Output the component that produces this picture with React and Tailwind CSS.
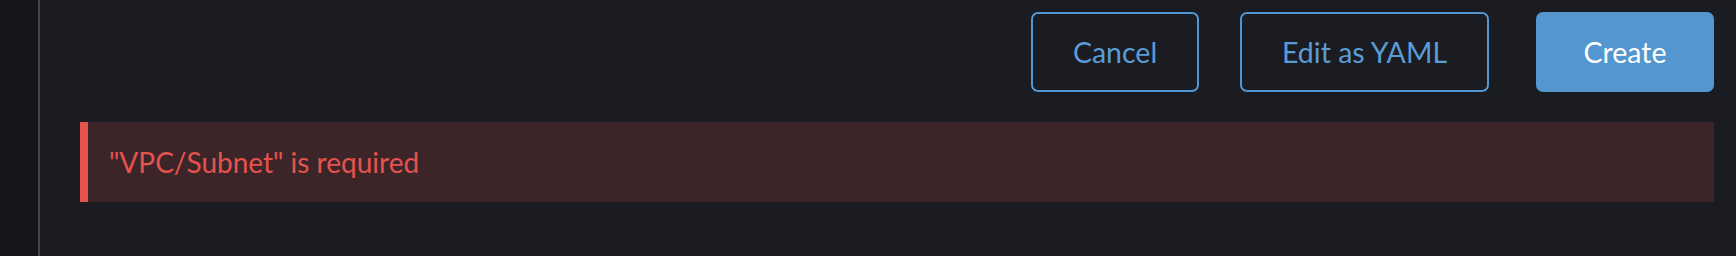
export default function App() {
  return (
    <div
      className="flex h-[256px] w-full bg-[#1b1c21]"
      style={{ fontFamily: "Lato, 'Noto Sans', sans-serif" }}
    >
      <div className="w-[38px] shrink-0 bg-[#151619]" />
      <div className="w-[2px] shrink-0 bg-[#46474c]" />
      <div className="flex min-w-0 flex-1 flex-col pt-[12px] pl-[40px] pr-[22px]">
        <div className="flex justify-end">
          <button
            type="button"
            className="h-[80px] w-[168px] rounded-[7px] border-2 border-[#5096d2] text-[28.5px] text-[#5a9cd6]"
          >
            Cancel
          </button>
          <button
            type="button"
            className="ml-[41px] h-[80px] w-[249px] rounded-[7px] border-2 border-[#5096d2] text-[28.5px] text-[#5a9cd6]"
          >
            Edit as YAML
          </button>
          <button
            type="button"
            className="ml-[47px] h-[80px] w-[178px] rounded-[7px] bg-[#5396d0] text-[28.5px] text-white"
          >
            Create
          </button>
        </div>
        <div className="mt-[30px] flex h-[80px] items-center border-l-[8px] border-[#e5534d] bg-[#3b2528] pl-[21px] text-[28px] text-[#e6524d]">
          "VPC/Subnet" is required
        </div>
      </div>
    </div>
  );
}
